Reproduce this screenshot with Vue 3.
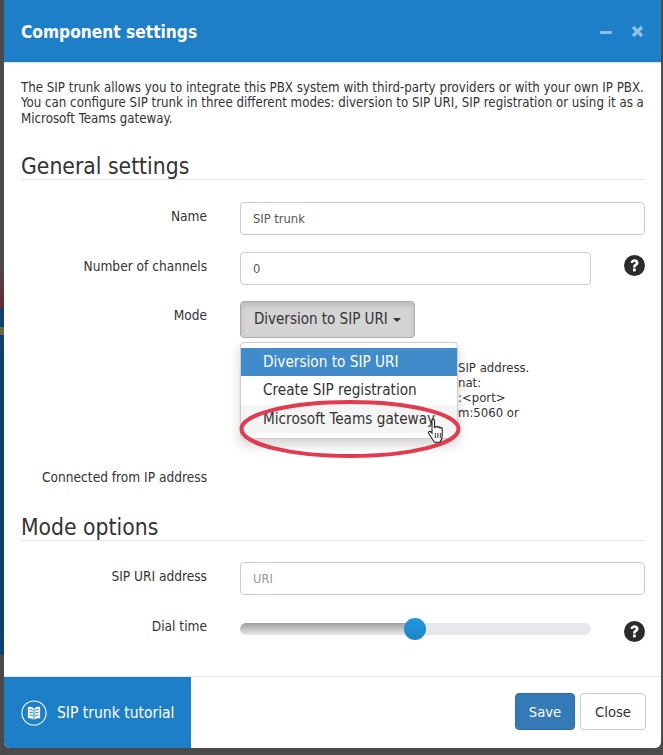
<script setup>
const intro = 'The SIP trunk allows you to integrate this PBX system with third-party providers or with your own IP PBX. You can configure SIP trunk in three different modes: diversion to SIP URI, SIP registration or using it as a Microsoft Teams gateway.'
const modes = ['Diversion to SIP URI', 'Create SIP registration', 'Microsoft Teams gateway']
</script>

<template>
  <div class="page">
    <div class="strip"><i class="s1"></i><i class="s2"></i><i class="s3"></i><i class="s4"></i><i class="s5"></i></div>
    <section class="modal">
      <header class="head">
        <h1>Component settings</h1>
        <div class="winctl">
          <svg width="12" height="12" viewBox="0 0 12 12"><rect x="0" y="5" width="12" height="3" rx="1" fill="#8dc0e8"/></svg>
          <svg width="13" height="13" viewBox="0 0 13 13"><path d="M2 2l9 9M11 2l-9 9" stroke="#8dc0e8" stroke-width="3.400"/></svg>
        </div>
      </header>
      <main class="body">
        <p class="intro">{{ intro }}</p>
        <h2>General settings</h2>
        <div class="row first">
          <label>Name</label>
          <div class="field full"><div class="input">SIP trunk</div></div>
        </div>
        <div class="row">
          <label>Number of channels</label>
          <div class="field"><div class="input">0</div></div>
          <svg class="help" viewBox="0 0 20 20"><circle cx="10" cy="10" r="10" fill="#2b2b2b"/><path d="M6.300 7.600c.2-2.200 1.700-3.500 3.800-3.500s3.700 1.200 3.700 3.200c0 2.800-2.700 2.600-2.700 4.500H8.600c0-3.200 2.500-3.100 2.500-4.400 0-.6-.4-1-1.100-1-.8 0-1.200.5-1.300 1.300z" fill="#fff"/><rect x="8.600" y="12.800" width="2.600" height="2.800" fill="#fff"/></svg>
        </div>
        <div class="row moderow">
          <label>Mode</label>
          <div class="modecol">
            <button class="dd">Diversion to SIP URI <span class="caret"></span></button>
            <div class="hint">
              <p>SIP address.</p><p>nat:</p><p>:&lt;port&gt;</p><p>m:5060 or</p>
            </div>
            <ul class="menu">
              <li v-for="(m, i) in modes" :key="m" :class="{ on: i === 0, hov: i === 2 }">{{ m }}</li>
            </ul>
            <svg class="ring" width="226" height="66" viewBox="0 0 226 66"><ellipse cx="112" cy="33" rx="108.500" ry="27" fill="none" stroke="#e23a4e" stroke-width="4"/></svg>
            <svg class="hand" width="20" height="26" viewBox="0 0 20 26"><path d="M6 2.500c0-1.800 2.500-1.800 2.500 0v7l.8-.2c0-1.500 2.300-1.500 2.300 0v.5c.2-1.300 2.300-1.300 2.300.1v.5c.3-1.100 2.300-1 2.300.4v7c0 3-1.500 5.500-2.500 6.500H8.500L3 16c-1.500-2 .5-3.500 2-2l1 1.200z" fill="#fff" stroke="#222" stroke-width="1.100"/><path d="M9.300 15v5M11.800 15v5M14.300 15v5" stroke="#222" stroke-width=".9"/></svg>
          </div>
        </div>
        <div class="row iprow">
          <label>Connected from IP address</label>
        </div>
        <h2 class="second">Mode options</h2>
        <div class="row first uri">
          <label>SIP URI address</label>
          <div class="field full"><div class="input ph">URI</div></div>
        </div>
        <div class="row dial">
          <label>Dial time</label>
          <div class="field slider"><div class="fill"></div><div class="knob"></div></div>
          <svg class="help" viewBox="0 0 20 20"><circle cx="10" cy="10" r="10" fill="#2b2b2b"/><path d="M6.300 7.600c.2-2.200 1.700-3.500 3.800-3.500s3.700 1.200 3.700 3.200c0 2.800-2.700 2.600-2.700 4.500H8.600c0-3.200 2.500-3.100 2.500-4.400 0-.6-.4-1-1.100-1-.8 0-1.200.5-1.300 1.300z" fill="#fff"/><rect x="8.600" y="12.800" width="2.600" height="2.800" fill="#fff"/></svg>
        </div>
      </main>
      <footer class="foot">
        <a class="tutorial">
          <svg width="26" height="26" viewBox="0 0 34 34" fill="none" stroke="#fff"><circle cx="17" cy="17" r="15.800" stroke-width="1.400"/><path d="M17 11c-2-2-5-2.500-8-2v15c3-.5 6 0 8 2 2-2 5-2.500 8-2V9c-3-.5-6 0-8 2z" fill="#fff" stroke="none"/><path d="M17 11v15M11 12.500c1.500 0 3 .3 4.500 1M11 16c1.500 0 3 .3 4.500 1M11 19.500c1.500 0 3 .3 4.500 1M23 12.500c-1.500 0-3 .3-4.500 1M23 16c-1.500 0-3 .3-4.500 1M23 19.500c-1.500 0-3 .3-4.500 1" stroke="#1e7fc9" stroke-width="1.300"/></svg>
          <span>SIP trunk tutorial</span>
        </a>
        <div class="btns">
          <button class="save">Save</button>
          <button class="close">Close</button>
        </div>
      </footer>
    </section>
  </div>
</template>

<style>
html, body { margin: 0; background: #4c4c4c; }
</style>

<style scoped>
.page { position: relative; width: 663px; height: 755px; overflow: hidden; background: #4b4b4b; font-family: "DejaVu Sans", sans-serif; color: #333; font-stretch: condensed; }
.strip { position: absolute; left: 0; top: 0; width: 4px; height: 755px; display: flex; flex-direction: column; }
.strip i { display: block; }
.s1 { height: 308px; background: linear-gradient(#4a4a4a 85%, #6a2a30); }
.s2 { height: 19px; background: #10406f; }
.s3 { height: 8px; background: #6a6a3c; }
.s4 { height: 320px; background: #10406f; }
.s5 { flex: 1; background: #4a4a4a; }
.modal { position: absolute; left: 4px; top: 0; width: 657px; height: 748px; background: #fff; border-radius: 0 0 6px 6px; overflow: hidden; display: flex; flex-direction: column; }
.head { height: 63px; flex: none; box-sizing: border-box; background: #1e7fc9; display: flex; align-items: center; justify-content: space-between; padding: 1px 17px 0; border-bottom: 1px solid #d8e6f2; }
h1 { margin: 0; font-size: 17.200px; font-weight: 700; color: #fff; }
.winctl { display: flex; gap: 19px; align-items: center; }
.body { flex: 1; padding: 0 16px 0 17px; }
.intro { margin: 0; padding-top: 17px; font-size: 13.200px; line-height: 15.300px; width: 630px; }
h2 { margin: 27px 0 0; font-size: 22.700px; font-weight: 400; line-height: 26px; border-bottom: 1px solid #e5e5e5; color: #333; }
.second { margin-top: 16px; }
.row { display: flex; align-items: flex-start; margin-top: 17px; }
.row.first { margin-top: 22px; }
.row.uri { margin-top: 21px; }
label { width: 186px; flex: none; text-align: right; font-size: 13.600px; font-weight: 400; line-height: 28px; color: #333; }
.field { margin-left: 33px; width: 351px; }
.field.full { width: 405px; }
.input { box-sizing: border-box; height: 33px; border: 1px solid #ccc; border-radius: 4px; padding: 0 12px; font-size: 12.800px; line-height: 31px; color: #555; }
.ph { color: #999; }
.help { width: 21px; height: 21px; margin: 3px 0 0 33px; }
.moderow { height: 159px; margin-top: 16px; }
.modecol { position: relative; margin-left: 33px; flex: 1; }
.dd { box-sizing: border-box; height: 37px; width: 175px; border: 1px solid #adadad; border-radius: 4px; background: #d4d4d4; font: inherit; font-size: 15px; color: #333; box-shadow: inset 0 3px 5px rgba(0,0,0,.125); padding: 0; }
.caret { display: inline-block; border-top: 4px solid #333; border-left: 4px solid transparent; border-right: 4px solid transparent; vertical-align: middle; margin-left: 1px; }
.hint { position: absolute; left: 218px; top: 59px; font-size: 13px; line-height: 15px; }
.hint p { margin: 0; }
.menu { position: absolute; left: 0; top: 41px; width: 218px; margin: 0; padding: 5px 0; list-style: none; background: #fff; border: 1px solid #ccc; border-radius: 4px; box-shadow: 0 6px 12px rgba(0,0,0,.175); box-sizing: border-box; }
.menu li { height: 28.500px; line-height: 28.500px; padding: 0 0 0 22px; white-space: nowrap; font-size: 15.200px; color: #333; }
.menu .on { background: #428bca; color: #fff; }
.menu .hov { background: #f5f5f5; }
.ring { position: absolute; left: -2px; top: 95px; }
.hand { position: absolute; left: 186px; top: 117px; }
.iprow { margin-top: 3px; height: 35px; }
.dial { margin-top: 17px; }
.slider { position: relative; height: 12px; margin-top: 11px; background: #e8e8ec; border-radius: 6px; }
.dial .help { margin-top: 9px; }
.fill { width: 175px; height: 12px; border-radius: 6px 0 0 6px; background: linear-gradient(#a0a0a0, #e8e8e8); }
.knob { position: absolute; left: 164px; top: -5px; width: 22px; height: 22px; border-radius: 50%; background: linear-gradient(#2196dc, #1b86c8); }
.foot { height: 71px; flex: none; border-top: 1px solid #e5e5e5; display: flex; justify-content: space-between; align-items: stretch; }
.tutorial { width: 187px; background: #1e7fc9; color: #fff; display: flex; align-items: center; gap: 10px; padding: 1px 0 0 17px; box-sizing: border-box; font-size: 15.500px; font-weight: 400; }
.btns { display: flex; gap: 5px; padding: 16px 15px 0 0; align-items: flex-start; }
.btns button { height: 37px; font: inherit; font-size: 14.700px; border-radius: 4px; padding: 0; }
.save { width: 60px; background: #337ab7; border: 1px solid #2e6da4; color: #fff; }
.close { width: 66px; background: #fff; border: 1px solid #ccc; color: #333; }
</style>
